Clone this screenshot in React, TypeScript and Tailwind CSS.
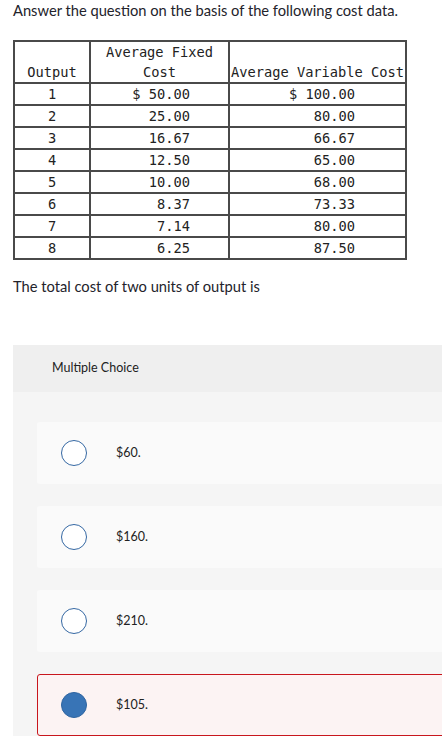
import React from "react";

const rows: [string, string, string][] = [
  ["1", "$ 50.00", "$ 100.00"],
  ["2", "25.00", "80.00"],
  ["3", "16.67", "66.67"],
  ["4", "12.50", "65.00"],
  ["5", "10.00", "68.00"],
  ["6", "8.37", "73.33"],
  ["7", "7.14", "80.00"],
  ["8", "6.25", "87.50"],
];

const options = [
  { label: "$60.", selected: false },
  { label: "$160.", selected: false },
  { label: "$210.", selected: false },
  { label: "$105.", selected: true },
];

export default function App() {
  return (
    <div
      className="w-[442px] h-[737px] overflow-hidden bg-white text-[#222]"
      style={{ fontFamily: "Lato, 'Open Sans', sans-serif" }}
    >
      <p className="pl-[13px] text-[14.7px] leading-[20px] text-[#23232b]">
        Answer the question on the basis of the following cost data.
      </p>

      <div className="ml-[13px] mt-[20px] w-[394px] border-2 border-[#4a4a4a] bg-[#4a4a4a] flex flex-col gap-[2px] text-[13.7px] leading-[20px] text-[#222]" style={{ fontFamily: "'DejaVu Sans Mono', 'Liberation Mono', monospace" }}>
        <div className="flex gap-[2px] h-[40px]">
          <div className="w-[74px] bg-white flex items-end justify-center">Output</div>
          <div className="w-[137px] bg-white flex flex-col items-center justify-end">
            <span>Average Fixed</span>
            <span>Cost</span>
          </div>
          <div className="flex-1 bg-white flex items-end justify-center whitespace-nowrap">
            Average Variable Cost
          </div>
        </div>
        {rows.map((r) => (
          <div key={r[0]} className="flex gap-[2px] h-[20px]">
            <div className="w-[74px] bg-white text-center">{r[0]}</div>
            <div className="w-[137px] bg-white text-right pr-[38px] whitespace-pre">{r[1]}</div>
            <div className="flex-1 bg-white text-right pr-[50px] whitespace-pre">{r[2]}</div>
          </div>
        ))}
      </div>

      <p className="pl-[13px] mt-[16px] text-[14.7px] leading-[20px] text-[#23232b]">
        The total cost of two units of output is
      </p>

      <div className="ml-[13px] mt-[49px] w-[460px] bg-[#f5f5f5]">
        <div className="h-[47px] bg-[#efefef] flex items-center pl-[39px] text-[12.5px] text-[#222]">
          Multiple Choice
        </div>
        <div className="pt-[30px] pl-[24px] flex flex-col gap-[22px]">
          {options.map((o) => (
            <div
              key={o.label}
              className={
                o.selected
                  ? "h-[62px] rounded-[3px] border border-[#c8161d] bg-[#fcf3f3] flex items-center pl-[23px]"
                  : "h-[62px] rounded-[3px] bg-[#fafafa] flex items-center pl-[24px]"
              }
            >
              {o.selected ? (
                <div className="w-[26px] h-[26px] rounded-full bg-[#3874b6] border border-[#2e64a0] shrink-0" />
              ) : (
                <div className="w-[26px] h-[26px] rounded-full bg-white border-[1.5px] border-[#3568a3] shrink-0" />
              )}
              <span className="ml-[29px] text-[12.5px] text-[#222]">{o.label}</span>
            </div>
          ))}
        </div>
      </div>
    </div>
  );
}
